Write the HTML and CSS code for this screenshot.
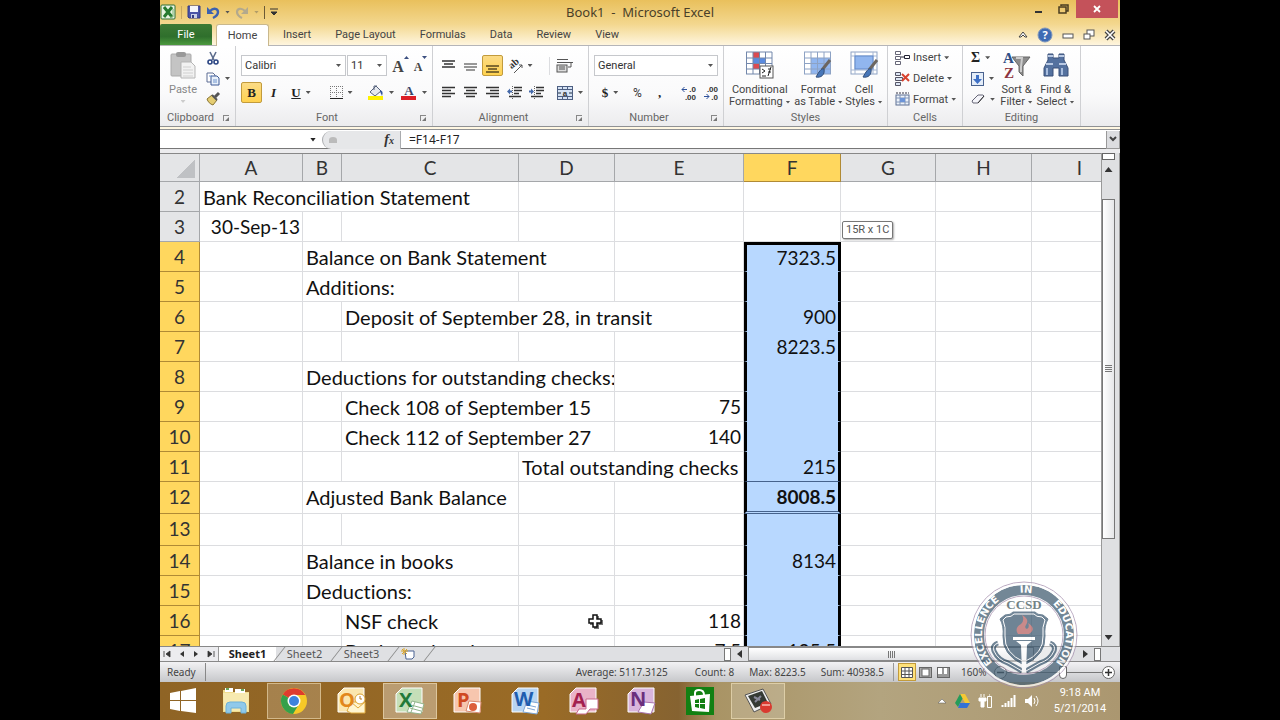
FILE: index.html
```html
<!DOCTYPE html>
<html lang="en">
<head>
    <meta charset="UTF-8">
    <meta name="viewport" content="width=device-width, initial-scale=1.0">
    <title>Book1 - Microsoft Excel</title>
    <link rel="stylesheet" href="styles.css">
</head>
<body>

<div class="screen">
    <!-- title bar -->
    <header class="title-bar">
        <div class="quick-access">
            <svg width="16" height="16" viewBox="0 0 16 16"><rect x="1" y="1" width="14" height="14" rx="1" fill="#e8f3e2" stroke="#2d6e35"/><path d="M4 3l8 10M12 3L4 13" stroke="#25792f" stroke-width="3"/><path d="M13 5v8h-3" stroke="#7bb573" fill="none"/></svg>
            <span class="bar-line"></span>
            <button class="icon-btn" aria-label="Save"><svg width="14" height="14" viewBox="0 0 14 14"><path d="M1 1h12v12H2l-1-1z" fill="#4b54a8" stroke="#333b86"/><rect x="3" y="1" width="8" height="6" fill="#f4f6fc"/><rect x="4" y="9" width="6" height="4" fill="#c9cfe6"/><rect x="5" y="10" width="2" height="3" fill="#333b86"/></svg></button>
            <button class="icon-btn" aria-label="Undo"><svg width="14" height="14" viewBox="0 0 14 14"><path d="M4 6c4-4 8-2 8 1s-3 5-5 6" fill="none" stroke="#3c62b0" stroke-width="2.4"/><path d="M1 2v7h7z" fill="#3c62b0"/></svg><i class="caret"></i></button>
            <button class="icon-btn faded" aria-label="Redo"><svg width="14" height="14" viewBox="0 0 14 14"><path d="M10 6C6 2 2 4 2 7s3 5 5 6" fill="none" stroke="#b3a98d" stroke-width="2.2"/><path d="M13 2v7H6z" fill="#b3a98d"/></svg><i class="caret"></i></button>
            <span class="bar-line dark"></span>
            <button class="icon-btn" aria-label="Customize"><svg width="8" height="8" viewBox="0 0 8 8"><path d="M0 1h8M1 4h6L4 7z" stroke="#333" fill="#333"/></svg></button>
        </div>
        <h1>Book1 &nbsp;- &nbsp;Microsoft Excel</h1>
        <div class="window-buttons">
            <button aria-label="Minimize"><svg width="10" height="10" viewBox="0 0 10 10"><path d="M1 8h7" stroke="#333" stroke-width="2"/></svg></button>
            <button aria-label="Restore"><svg width="11" height="10" viewBox="0 0 11 10"><path d="M3 2V1h7v6H8" fill="none" stroke="#4a3d20" stroke-width="1.5"/><rect x="1" y="3" width="7" height="6" fill="none" stroke="#4a3d20" stroke-width="1.5"/></svg></button>
            <button class="close" aria-label="Close"><svg width="8" height="8" viewBox="0 0 8 8"><path d="M1 1l6 6M7 1L1 7" stroke="#fff" stroke-width="1.8"/></svg></button>
        </div>
    </header>

    <!-- ribbon tabs -->
    <nav class="ribbon-tabs">
        <button class="tab file">File</button>
        <button class="tab active">Home</button>
        <button class="tab">Insert</button>
        <button class="tab">Page Layout</button>
        <button class="tab">Formulas</button>
        <button class="tab">Data</button>
        <button class="tab">Review</button>
        <button class="tab">View</button>
        <div class="tab-tools">
            <svg width="10" height="8" viewBox="0 0 10 8"><path d="M1 6l4-5 4 5H7L5 4 3 6z" fill="#fff" stroke="#444"/></svg>
            <svg width="16" height="16" viewBox="0 0 16 16"><circle cx="8" cy="8" r="7" fill="#3f6cb4" stroke="#7f97bd"/><text x="8" y="12" text-anchor="middle" class="help-mark">?</text></svg>
            <svg width="12" height="8" viewBox="0 0 12 8"><rect x="1" y="3" width="10" height="4" fill="#fff" stroke="#555"/></svg>
            <svg width="12" height="12" viewBox="0 0 12 12"><rect x="4" y="1" width="7" height="6" fill="#fff" stroke="#555"/><rect x="1" y="5" width="6" height="5" fill="#fff" stroke="#555"/></svg>
            <svg width="12" height="12" viewBox="0 0 12 12"><path d="M2 2l8 8M10 2l-8 8" stroke="#444" stroke-width="4"/><path d="M2 2l8 8M10 2l-8 8" stroke="#fff" stroke-width="1.6"/></svg>
        </div>
    </nav>

    <!-- ribbon -->
    <section class="ribbon">
        <div class="group clipboard">
            <div class="group-body">
                <button class="big-btn muted">
                    <svg width="27" height="28" viewBox="0 0 27 28"><rect x="1" y="3" width="20" height="22" rx="1" fill="#c4c4c4" stroke="#aaa"/><rect x="6" y="1" width="10" height="5" rx="2" fill="#999"/><path d="M11 11h10l4 4v12H11z" fill="#f2f2f2" stroke="#b5b5b5"/><path d="M13 16h8M13 19h10M13 22h10M13 25h10" stroke="#d0d0d0"/></svg>
                    <span>Paste</span><i class="caret"></i>
                </button>
                <div class="stack">
                    <button class="icon-btn" aria-label="Cut"><svg width="14" height="14" viewBox="0 0 14 14"><path d="M4 1l4 8M10 1L6 9" stroke="#5d6c8c" stroke-width="1.6"/><circle cx="4" cy="11" r="2" fill="none" stroke="#2c4684" stroke-width="1.6"/><circle cx="10" cy="11" r="2" fill="none" stroke="#2c4684" stroke-width="1.6"/></svg></button>
                    <button class="icon-btn" aria-label="Copy"><svg width="14" height="14" viewBox="0 0 14 14"><path d="M1 1h6l2 2v7H1z" fill="#fff" stroke="#5d6d93"/><path d="M5 4h6l2 2v7H5z" fill="#e9f1fb" stroke="#3e5a96"/><path d="M7 8h4M7 10h4M3 4h3" stroke="#6e93cc"/></svg><i class="caret"></i></button>
                    <button class="icon-btn" aria-label="Format Painter"><svg width="14" height="14" viewBox="0 0 14 14"><path d="M9 5l4-4" stroke="#555" stroke-width="3"/><path d="M6 3l5 5-4 5C4 12 2 10 1 7z" fill="#e5cd72" stroke="#8a7532"/><path d="M6 3l5 5" stroke="#555" stroke-width="2"/></svg></button>
                </div>
            </div>
            <div class="group-label">Clipboard<i class="launcher"></i></div>
        </div>

        <div class="group font">
            <div class="group-body rows">
                <div class="row">
                    <div class="combo font-name"><select aria-label="Font"><option>Calibri</option></select></div>
                    <div class="combo font-size"><select aria-label="Font size"><option>11</option></select></div>
                    <button class="tool grow" aria-label="Increase font size">A<svg width="5" height="4" viewBox="0 0 5 4"><path d="M0 3l2.500-3L5 3z" fill="#3c4f80"/></svg></button>
                    <button class="tool shrink" aria-label="Decrease font size">A<svg width="5" height="4" viewBox="0 0 5 4"><path d="M0 0h5L2.500 3z" fill="#3c4f80"/></svg></button>
                </div>
                <div class="row">
                    <button class="tool on letter">B</button>
                    <button class="tool letter italic">I</button>
                    <button class="tool letter under wide"><u>U</u><i class="caret"></i></button>
                    <span class="sep"></span>
                    <button class="tool wide" aria-label="Borders"><svg width="13" height="13" viewBox="0 0 13 13"><path d="M.5 0v12M6.500 0v12M12.500 0v12M0 .5h13M0 6.500h13" stroke="#777" stroke-dasharray="1 1"/><path d="M0 12.500h13" stroke="#222"/></svg><i class="caret"></i></button>
                    <span class="sep"></span>
                    <button class="tool wide" aria-label="Fill color"><svg width="16" height="15" viewBox="0 0 16 15"><path d="M8 1l5 5-6 5-5-4z" fill="#e6e9ef" stroke="#56627c"/><path d="M6 5V1h3" fill="none" stroke="#56627c"/><path d="M12 5c3 1 3 3 2 6-1-3-2-3-2-6" fill="#34559a"/><rect x="0" y="11" width="15" height="4" fill="#fff200"/></svg><i class="caret"></i></button>
                    <button class="tool wide" aria-label="Font color"><svg width="16" height="15" viewBox="0 0 16 15"><text x="8" y="10" text-anchor="middle" class="color-a">A</text><rect x="0" y="11" width="15" height="4" fill="#dd1f26"/></svg><i class="caret"></i></button>
                </div>
            </div>
            <div class="group-label">Font<i class="launcher"></i></div>
        </div>

        <div class="group alignment">
            <div class="group-body rows">
                <div class="row">
                    <button class="tool" aria-label="Top align"><svg width="14" height="14" viewBox="0 0 14 14"><path d="M0 2h13M2 5h9M0 8h13" stroke="#333" stroke-width="1.5"/></svg></button>
                    <button class="tool" aria-label="Middle align"><svg width="14" height="14" viewBox="0 0 14 14"><path d="M0 5h13M0 8h13M2 11h9" stroke="#777" stroke-width="1.5"/></svg></button>
                    <button class="tool on" aria-label="Bottom align"><svg width="14" height="14" viewBox="0 0 14 14"><path d="M0 7h13M2 10h9M0 13h13" stroke="#5a4a20" stroke-width="1.5"/></svg></button>
                    <button class="tool wide" aria-label="Orientation"><svg width="15" height="14" viewBox="0 0 15 14"><text x="2" y="8" transform="rotate(-40 6 7)" class="ab">ab</text><path d="M6 14l8-8M11 6h3v3" stroke="#555" fill="none"/></svg><i class="caret"></i></button>
                    <span class="sep"></span>
                    <button class="tool" aria-label="Wrap text"><svg width="16" height="15" viewBox="0 0 16 15"><path d="M0 1.500h11M0 4.500h16" stroke="#555"/><rect x="0" y="7" width="10" height="7" fill="#ddd" stroke="#555"/><path d="M2 9h6M2 11h6" stroke="#555"/><path d="M14 4v5h-3" stroke="#555" fill="none"/></svg></button>
                </div>
                <div class="row">
                    <button class="tool" aria-label="Align left"><svg width="14" height="13" viewBox="0 0 14 13"><path d="M0 1.500h13M0 4.500h9M0 7.500h13M0 10.500h9" stroke="#333" stroke-width="1.500"/></svg></button>
                    <button class="tool" aria-label="Center"><svg width="14" height="13" viewBox="0 0 14 13"><path d="M0 1.500h13M2 4.500h9M0 7.500h13M2 10.500h9" stroke="#333" stroke-width="1.500"/></svg></button>
                    <button class="tool" aria-label="Align right"><svg width="14" height="13" viewBox="0 0 14 13"><path d="M0 1.500h13M4 4.500h9M0 7.500h13M4 10.500h9" stroke="#333" stroke-width="1.500"/></svg></button>
                    <button class="tool" aria-label="Decrease indent"><svg width="15" height="13" viewBox="0 0 15 13"><path d="M5.500 0v13" stroke="#666" stroke-dasharray="1 1"/><path d="M7 1.500h8M7 4.500h8M7 7.500h5M2 10.500h12" stroke="#333" stroke-width="1.500"/><path d="M0 5.500l3-3v2h2v2H3v2z" fill="#4468a8"/></svg></button>
                    <button class="tool" aria-label="Increase indent"><svg width="15" height="13" viewBox="0 0 15 13"><path d="M5.500 0v13" stroke="#666" stroke-dasharray="1 1"/><path d="M7 1.500h8M7 4.500h8M7 7.500h5M2 10.500h12" stroke="#333" stroke-width="1.500"/><path d="M5 5.500l-3-3v2H0v2h2v2z" fill="#4468a8"/></svg></button>
                    <button class="tool merge wide" aria-label="Merge and center"><svg width="16" height="14" viewBox="0 0 16 14"><rect x=".5" y=".5" width="15" height="13" fill="#d5e2f4" stroke="#4d5f82"/><path d="M0 3.500h16M0 10.500h16M5.500 0v3M10.500 0v3M5.500 11v3M10.500 11v3" stroke="#4d5f82"/><text x="8" y="10" text-anchor="middle" class="tiny">a</text><path d="M1 7h3M12 7h3" stroke="#234"/></svg><i class="caret"></i></button>
                </div>
            </div>
            <div class="group-label">Alignment<i class="launcher"></i></div>
        </div>

        <div class="group number">
            <div class="group-body rows">
                <div class="row">
                    <div class="combo number-format"><select aria-label="Number format"><option>General</option></select></div>
                </div>
                <div class="row">
                    <button class="tool letter wide">$<i class="caret"></i></button>
                    <button class="tool percent">%</button>
                    <button class="tool letter">,</button>
                    <span class="sep"></span>
                    <button class="tool" aria-label="Increase decimal"><svg width="16" height="14" viewBox="0 0 16 14"><text x="15" y="6" text-anchor="end" class="tiny">.0</text><text x="15" y="14" text-anchor="end" class="tiny">.00</text><path d="M1 3.500h5M3.500 1L1 3.500 3.500 6" stroke="#2e519a" fill="none"/></svg></button>
                    <button class="tool" aria-label="Decrease decimal"><svg width="16" height="14" viewBox="0 0 16 14"><text x="15" y="6" text-anchor="end" class="tiny">.00</text><text x="15" y="14" text-anchor="end" class="tiny">.0</text><path d="M1 10.500h5M3.500 8L6 10.500 3.500 13" stroke="#2e519a" fill="none"/></svg></button>
                </div>
            </div>
            <div class="group-label">Number<i class="launcher"></i></div>
        </div>

        <div class="group styles">
            <div class="group-body">
                <button class="big-btn cond">
                    <svg width="28" height="28" viewBox="0 0 28 28"><rect x="1" y="1" width="25" height="22" fill="#fff"/><rect x="7" y="1" width="6" height="17" fill="#dc4a50"/><rect x="7" y="7" width="12" height="6" fill="#5a8be0"/><path d="M.5 1v22M7 1v22M13.500 1v22M19.500 1v22M26 1v22M0 1h26M0 7h26M0 12.500h26M0 18h26M0 23h26" stroke="#7287ab"/><rect x="14" y="15" width="13" height="12" fill="#fff" stroke="#555"/><path d="M16 18l3 2-3 2M16 25h4M22 18h3M22 21h3M25 16l-3 9" stroke="#222" fill="none"/></svg>
                    <span>Conditional<br>Formatting <i class="caret"></i></span>
                </button>
                <button class="big-btn as-table">
                    <svg width="28" height="28" viewBox="0 0 28 28"><rect x="1" y="1" width="26" height="22" fill="#fff"/><rect x="7" y="7" width="20" height="16" fill="#91b6ef"/><path d="M.5 1v22M7 1v22M13.500 1v22M20 1v22M26.500 1v22M0 1h27M0 7h27M0 12.500h27M0 18h27M0 23h27" stroke="#8da2c4"/><path d="M26 9l-8 10" stroke="#6c6660" stroke-width="3"/><path d="M20 18c-3-1-5 3-8 8 5 1 9-2 8-8" fill="#4776b8" stroke="#35517c"/></svg>
                    <span>Format<br>as Table <i class="caret"></i></span>
                </button>
                <button class="big-btn cell-styles">
                    <svg width="28" height="28" viewBox="0 0 28 28"><rect x="1" y="1" width="26" height="22" fill="#fff" stroke="#8da2c4"/><path d="M5 1v22M23 1v22M1 5h26M1 19h26" stroke="#a5b6d2"/><rect x="5" y="5" width="18" height="13" fill="#91b6ef" stroke="#6389c9"/><path d="M27 9l-8 10" stroke="#6c6660" stroke-width="3"/><path d="M21 18c-3-1-5 3-8 8 5 1 9-2 8-8" fill="#4776b8" stroke="#35517c"/></svg>
                    <span>Cell<br>Styles <i class="caret"></i></span>
                </button>
            </div>
            <div class="group-label">Styles</div>
        </div>

        <div class="group cells">
            <div class="group-body">
                <div class="stack">
                    <button class="line-btn"><svg width="15" height="14" viewBox="0 0 15 14"><path d="M.5.5h5v3h-5zM.5 5.500h5v3h-5zM.5 10.500h5v3h-5z" fill="#fff" stroke="#667"/><path d="M6 6h3M9.500 4.500h5v3h-5z" stroke="#223" fill="#fff"/></svg>Insert <i class="caret"></i></button>
                    <button class="line-btn"><svg width="15" height="14" viewBox="0 0 15 14"><path d="M.5.5h5v3h-5zM.5 5.500h7v3h-7zM.5 10.500h5v3h-5z" fill="#dde6f4" stroke="#556"/><path d="M7 2l7 7M14 2L7 9" stroke="#d8432f" stroke-width="2"/></svg>Delete <i class="caret"></i></button>
                    <button class="line-btn"><svg width="15" height="14" viewBox="0 0 15 14"><path d="M1 1h13" stroke="#334" stroke-dasharray="2 1"/><rect x="1" y="3" width="13" height="10" fill="#edf3fb" stroke="#5c6f92"/><path d="M5 3v10M10 3v10M1 6h13M1 10h13" stroke="#8295b6"/><rect x="5" y="6" width="5" height="4" fill="#6c94d8"/></svg>Format <i class="caret"></i></button>
                </div>
            </div>
            <div class="group-label">Cells</div>
        </div>

        <div class="group editing">
            <div class="group-body">
                <div class="stack">
                    <button class="icon-btn sigma">Σ<i class="caret"></i></button>
                    <button class="icon-btn" aria-label="Fill"><svg width="13" height="14" viewBox="0 0 13 14"><rect x=".5" y=".5" width="12" height="13" fill="#e4edf9" stroke="#49628f"/><path d="M5 3h3v4h3l-4.500 5L2 7h3z" fill="#3e70c6"/></svg><i class="caret"></i></button>
                    <button class="icon-btn" aria-label="Clear"><svg width="14" height="12" viewBox="0 0 14 12"><path d="M1 8l6-6h5l1 1-6 7H2z" fill="#f5f5fa" stroke="#667"/><path d="M7 10l6-7" stroke="#333"/></svg><i class="caret"></i></button>
                </div>
                <button class="big-btn">
                    <svg width="28" height="28" viewBox="0 0 28 28"><text x="0" y="12" class="sort-a">A</text><text x="1" y="27" class="sort-z">Z</text><path d="M9 6h18l-7 9v10l-4-4v-6z" fill="#8c8c8c" stroke="#666"/><path d="M13 7h6l-1 9v5" fill="none" stroke="#ccc" stroke-width="2"/></svg>
                    <span>Sort &amp;<br>Filter <i class="caret"></i></span>
                </button>
                <button class="big-btn">
                    <svg width="28" height="28" viewBox="0 0 28 28"><path d="M6 3h5v4h6V3h5v6l4 8v8h-9v-8h-6v8H2v-8l4-8z" fill="#54719f" stroke="#3a5078"/><path d="M6 5h5M17 5h5M4 13h7M17 13h7" stroke="#b9c9e3" stroke-width="2"/><path d="M5 17v7M20 17v7" stroke="#a9bedf" stroke-width="2"/></svg>
                    <span>Find &amp;<br>Select <i class="caret"></i></span>
                </button>
            </div>
            <div class="group-label">Editing</div>
        </div>
    </section>

    <!-- formula bar -->
    <div class="formula-bar">
        <input class="name-box" type="text" aria-label="Name box">
        <i class="caret black"></i>
        <div class="fx"><span class="knob"></span><span class="fx-mark"><i>f</i><small>x</small></span></div>
        <input class="formula" type="text" aria-label="Formula" value="=F14-F17">
        <button class="expand" aria-label="Expand formula bar"><svg width="8" height="6" viewBox="0 0 8 6"><path d="M1 1l3 3 3-3" stroke="#444" stroke-width="2" fill="none"/></svg></button>
    </div>

    <!-- sheet -->
    <main class="sheet">
        <div class="grid-area">
            <table class="grid">
                <colgroup><col class="w-head"><col class="w-a"><col class="w-b"><col class="w-c"><col class="w-d"><col class="w-e"><col class="w-f"><col class="w-g"><col class="w-h"><col class="w-i"></colgroup>
                <thead>
                    <tr><th class="corner"></th><th>A</th><th>B</th><th>C</th><th>D</th><th>E</th><th class="picked">F</th><th>G</th><th>H</th><th>I</th></tr>
                </thead>
                <tbody>
                    <tr><th>2</th><td colspan="3">Bank Reconciliation Statement</td><td></td><td></td><td></td><td></td><td></td><td></td></tr>
                    <tr><th>3</th><td class="num">30-Sep-13</td><td></td><td></td><td></td><td></td><td></td><td></td><td></td><td></td></tr>
                    <tr class="first"><th class="picked">4</th><td></td><td colspan="3">Balance on Bank Statement</td><td></td><td class="num sel">7323.5</td><td></td><td></td><td></td></tr>
                    <tr><th class="picked">5</th><td></td><td colspan="2">Additions:</td><td></td><td></td><td class="sel"></td><td></td><td></td><td></td></tr>
                    <tr><th class="picked">6</th><td></td><td></td><td colspan="3">Deposit of September 28, in transit</td><td class="num sel">900</td><td></td><td></td><td></td></tr>
                    <tr><th class="picked">7</th><td></td><td></td><td></td><td></td><td></td><td class="num sel">8223.5</td><td></td><td></td><td></td></tr>
                    <tr><th class="picked">8</th><td></td><td colspan="3">Deductions for outstanding checks:</td><td></td><td class="sel"></td><td></td><td></td><td></td></tr>
                    <tr><th class="picked">9</th><td></td><td></td><td colspan="2">Check 108 of September 15</td><td class="num">75</td><td class="sel"></td><td></td><td></td><td></td></tr>
                    <tr><th class="picked">10</th><td></td><td></td><td colspan="2">Check 112 of September 27</td><td class="num">140</td><td class="sel"></td><td></td><td></td><td></td></tr>
                    <tr><th class="picked">11</th><td></td><td></td><td></td><td colspan="2">Total outstanding checks</td><td class="num sel ruled">215</td><td></td><td></td><td></td></tr>
                    <tr class="tall"><th class="picked">12</th><td></td><td colspan="2">Adjusted Bank Balance</td><td></td><td></td><td class="num sel total">8008.5</td><td></td><td></td><td></td></tr>
                    <tr class="tall"><th class="picked">13</th><td></td><td></td><td></td><td></td><td></td><td class="sel"></td><td></td><td></td><td></td></tr>
                    <tr><th class="picked">14</th><td></td><td colspan="2">Balance in books</td><td></td><td></td><td class="num sel">8134</td><td></td><td></td><td></td></tr>
                    <tr><th class="picked">15</th><td></td><td colspan="2">Deductions:</td><td></td><td></td><td class="sel"></td><td></td><td></td><td></td></tr>
                    <tr><th class="picked">16</th><td></td><td></td><td>NSF check</td><td></td><td class="num">118</td><td class="sel"></td><td></td><td></td><td></td></tr>
                    <tr><th class="picked">17</th><td></td><td></td><td>Bank service charge</td><td></td><td class="num">7.5</td><td class="num sel">125.5</td><td></td><td></td><td></td></tr>
                </tbody>
            </table>
            <div class="size-tip">15R x 1C</div>
            <svg class="cursor" width="18" height="18" viewBox="0 0 18 18"><path d="M7 3h5v4h4v5h-4v4H7v-4H3V7h4z" fill="#777"/><path d="M6 2h4v4h4v4h-4v4H6v-4H2V6h4z" fill="#fff" stroke="#111" stroke-width="1.500"/></svg>
        </div>
        <div class="v-scroll">
            <span class="split"></span>
            <span class="arrow up"></span>
            <div class="v-track"><div class="v-thumb"><i></i></div></div>
            <span class="arrow down"></span>
        </div>
    </main>

    <!-- sheet tabs and horizontal scroll -->
    <div class="sheet-bar">
        <div class="sheet-nav">
            <svg width="8" height="8" viewBox="0 0 8 8"><path d="M1 1v6M7 1v6L3 4z" fill="#333" stroke="#333" stroke-width=".8"/></svg>
            <svg width="8" height="8" viewBox="0 0 8 8"><path d="M6 1v6L2 4z" fill="#333"/></svg>
            <svg width="8" height="8" viewBox="0 0 8 8"><path d="M2 1v6l4-3z" fill="#333"/></svg>
            <svg width="8" height="8" viewBox="0 0 8 8"><path d="M7 1v6M1 1v6l4-3z" fill="#333" stroke="#333" stroke-width=".8"/></svg>
        </div>
        <button class="sheet-tab current">Sheet1</button>
        <button class="sheet-tab">Sheet2</button>
        <button class="sheet-tab">Sheet3</button>
        <button class="sheet-tab new" aria-label="Insert worksheet"><svg width="14" height="12" viewBox="0 0 14 12"><path d="M4 3h9v6l-2 2H5z" fill="#fff" stroke="#4a6293"/><path d="M3 0v7M0 3h7M1 1l5 5M6 1L1 6" stroke="#d9a52c"/></svg></button>
        <div class="h-scroll">
            <span class="h-split"></span>
            <span class="arrow left"></span>
            <div class="h-track"><div class="h-thumb"><i></i></div></div>
            <span class="arrow right"></span>
            <span class="h-split"></span>
        </div>
    </div>

    <!-- status bar -->
    <footer class="status-bar">
        <span class="ready">Ready</span>
        <div class="stats">
            <span>Average: 5117.3125</span>
            <span>Count: 8</span>
            <span>Max: 8223.5</span>
            <span>Sum: 40938.5</span>
        </div>
        <div class="views">
            <button class="on" aria-label="Normal"><svg width="12" height="11" viewBox="0 0 12 11"><path d="M.5.500h11v10H.5zM4 0v11M8 0v11M0 4h12M0 7.500h12" fill="#fff" stroke="#555"/></svg></button>
            <button aria-label="Page layout"><svg width="13" height="11" viewBox="0 0 13 11"><rect x=".5" y=".5" width="12" height="10" fill="#aaa" stroke="#666"/><rect x="3" y="2" width="7" height="7" fill="#fff" stroke="#666"/></svg></button>
            <button aria-label="Page break preview"><svg width="13" height="11" viewBox="0 0 13 11"><rect x=".5" y=".5" width="12" height="10" fill="#999" stroke="#666"/><path d="M1 1h4v6H1zM7 1h3v6H7z" fill="#fff"/></svg></button>
        </div>
        <div class="zoom">
            <span>160%</span>
            <button aria-label="Zoom out"><svg width="11" height="11" viewBox="0 0 11 11"><path d="M2 5.500h7" stroke="#333" stroke-width="1.500"/></svg></button>
            <input type="range" min="10" max="220" value="135" aria-label="Zoom">
            <button aria-label="Zoom in"><svg width="11" height="11" viewBox="0 0 11 11"><path d="M2 5.500h7M5.500 2v7" stroke="#333" stroke-width="1.500"/></svg></button>
        </div>
    </footer>

    <!-- taskbar -->
    <div class="taskbar">
        <button class="start" aria-label="Start"><svg width="28" height="26" viewBox="0 0 28 26"><path d="M1 5l10-2v9H1zM12 3l15-3v12H12zM1 13h10v10L1 21zM12 13h15v12l-15-2z" fill="#fff"/></svg></button>
        <button class="task" aria-label="File Explorer"><svg width="30" height="28" viewBox="0 0 30 28"><path d="M2 3h8l2 2h16v20H2z" fill="#f1dd8e"/><path d="M4 1h8v4H4zM14 2h10v4H14z" fill="#fff"/><path d="M5 2h3M20 3h3" stroke="#6aa75c" stroke-width="2"/><path d="M2 6h26l-1 18H3z" fill="#f7eab0"/><path d="M5 26v-7q0-4 4-4h12q4 0 4 4v7h-5v-5h-10v5z" fill="#8fc9ea" stroke="#6db1d8"/></svg></button>
        <button class="task open" aria-label="Chrome"><svg width="28" height="28" viewBox="0 0 28 28"><circle cx="14" cy="14" r="13" fill="#f6c927"/><path d="M14 14L2.700 7.500A13 13 0 0 1 25.300 8H14z" fill="#df3c2e"/><path d="M14 14L2.700 7.500A13 13 0 0 0 13 27l6-10z" fill="#35a04b"/><circle cx="14" cy="14" r="6.500" fill="#fff"/><circle cx="14" cy="14" r="5" fill="#3d82dc"/></svg></button>
        <button class="task" aria-label="Outlook"><svg width="30" height="28" viewBox="0 0 30 28"><path d="M7 1h20v24H1V7z" fill="#fbe6ae" stroke="#fff"/><path d="M14 15h14v11H14l-4-2z" fill="#fff5d0" stroke="#e1aa3d"/><path d="M14 15l7 6 7-6" fill="none" stroke="#e1aa3d"/><circle cx="23" cy="12" r="5" fill="#fff" stroke="#dba02d"/><path d="M23 9v3h2" fill="none" stroke="#b9761d"/><text x="2" y="20" class="app-letter outlook">O</text></svg></button>
        <button class="task open current" aria-label="Excel"><svg width="30" height="28" viewBox="0 0 30 28"><path d="M7 1h20v24H1V7z" fill="#c5dfb8" stroke="#fff"/><path d="M17 14l12 3-3 10-14-2z" fill="#fff" stroke="#92b58b"/><path d="M16 18l11 3M15 21l11 3M20 15l-4 10" stroke="#8fb389"/><text x="4" y="20" class="app-letter excel">X</text></svg></button>
        <button class="task" aria-label="PowerPoint"><svg width="30" height="28" viewBox="0 0 30 28"><path d="M7 1h20v24H1V7z" fill="#f7c6ae" stroke="#fff"/><path d="M16 14l12 1-1 11-14-2z" fill="#fff" stroke="#d98a70"/><circle cx="20" cy="20" r="4" fill="#dc603c"/><text x="4" y="20" class="app-letter ppt">P</text></svg></button>
        <button class="task" aria-label="Word"><svg width="30" height="28" viewBox="0 0 30 28"><path d="M7 1h20v24H1V7z" fill="#b9d5f2" stroke="#fff"/><path d="M16 14l12 2-2 11-14-2z" fill="#fff" stroke="#7ca5d5"/><path d="M16 18l9 2M16 21l8 2" stroke="#7ca5d5"/><text x="3" y="19" class="app-letter word">W</text></svg></button>
        <button class="task" aria-label="Access"><svg width="30" height="28" viewBox="0 0 30 28"><path d="M7 1h20v24H1V7z" fill="#eab3c8" stroke="#fff"/><path d="M17 12h12v10h-8l-4 5H7l3-5h7z" fill="#fff" stroke="#c9688d"/><text x="3" y="20" class="app-letter access">A</text></svg></button>
        <button class="task" aria-label="OneNote"><svg width="30" height="28" viewBox="0 0 30 28"><path d="M7 1h20v24H1V7z" fill="#d9b5dc" stroke="#fff"/><path d="M17 15l11 1-4 11-13-2z" fill="#fff" stroke="#a974ad"/><text x="3" y="19" class="app-letter note">N</text></svg></button>
        <button class="task" aria-label="Store"><svg width="28" height="28" viewBox="0 0 28 28"><rect width="28" height="28" fill="#128012"/><path d="M4 9l20-2-1 18-17-1z" fill="#fff"/><path d="M9 10V6q0-3 4-3 5 0 5 5" fill="none" stroke="#fff" stroke-width="2"/><path d="M9 13l4-1v4H9zM14 12l5-1v5h-5zM9 17h4v4l-4-1zM14 17h5v5l-5-1z" fill="#128012"/></svg></button>
        <button class="task open" aria-label="Recorder"><svg width="30" height="26" viewBox="0 0 30 26"><path d="M2 7l18-6 8 15-17 8z" fill="#eee" stroke="#555"/><path d="M5 8l14-5 6 12-13 5z" fill="#353a34"/><path d="M11 9l6 3M12 14l6-6" stroke="#889" stroke-width="2"/><circle cx="23" cy="19" r="6" fill="#d93a30"/><path d="M19 17h8" stroke="#f09a90" stroke-width="2"/></svg></button>
        <div class="tray">
            <svg width="10" height="6" viewBox="0 0 10 6"><path d="M1 5l4-4 4 4z" fill="#fff" stroke="#555" stroke-width=".5"/></svg>
            <svg width="15" height="14" viewBox="0 0 15 14"><path d="M5 0h5l5 9h-5z" fill="#f4c933"/><path d="M5 0l2.500 4.500L3 13 0 9z" fill="#259c5a"/><path d="M5 9h10l-3 5H3z" fill="#3472d5"/></svg>
            <svg width="15" height="14" viewBox="0 0 15 14"><path d="M3 0v3M6 0v3M1 4h7v3H6v6H3V7H1z" fill="#fff" stroke="#fff"/><path d="M9.500 2.500h4v11h-4zM11 1h1" fill="none" stroke="#fff"/></svg>
            <svg width="15" height="12" viewBox="0 0 15 12"><path d="M1.500 12v-2M4.500 12V8M7.500 12V6M10.500 12V3M13.500 12V0" stroke="#fff" stroke-width="2"/></svg>
            <svg width="16" height="14" viewBox="0 0 16 14"><path d="M1 5h3l4-4v12L4 9H1z" fill="#fff"/><path d="M10 4q2 3 0 6M12 2q4 5 0 10" stroke="#fff" fill="none"/></svg>
        </div>
        <div class="clock"><span>9:18 AM</span><span>5/21/2014</span></div>
    </div>

    <!-- school seal over the corner -->
    <svg class="seal" width="108" height="108" viewBox="0 0 108 108">
        <defs><path id="ring" d="M24 83A42 42 0 1 1 84 83"/></defs>
        <circle cx="54" cy="54" r="45" fill="none" stroke="#455f73" stroke-width="10"/>
        <circle cx="54" cy="54" r="53" fill="none" stroke="#a58fae"/>
        <circle cx="54" cy="54" r="51" fill="none" stroke="#fff" stroke-width="2"/>
        <circle cx="54" cy="54" r="39" fill="#fff" fill-opacity=".5" stroke="#a58fae"/>
        <text class="seal-ring"><textPath href="#ring" startOffset="1%">EXCELLENCE</textPath></text>
        <text class="seal-ring" text-anchor="middle"><textPath href="#ring" startOffset="51%">IN</textPath></text>
        <text class="seal-ring" text-anchor="end"><textPath href="#ring" startOffset="99%">EDUCATION</textPath></text>
        <text x="54" y="28" text-anchor="middle" class="seal-name">CCSD</text>
        <path d="M35 34q6 0 8-3h22q2 3 8 3l5 4q-4 7-3 17 1 19-21 29-22-10-21-29 1-10-3-17z" fill="#3f5b72" stroke="#3f5b72"/>
        <path d="M36 36q6 0 8-3h20q2 3 8 3l3 3q-3 7-2 16 1 17-19 26-20-9-19-26 1-9-2-16z" fill="none" stroke="#fff"/>
        <path d="M28 62q-6 2-4 8 4 9 14 12l14 8M80 62q6 2 4 8-4 9-14 12l-14 8" fill="none" stroke="#3f5b72" stroke-width="5"/>
        <path d="M28 62q-6 2-4 8 4 9 14 12l14 8M80 62q6 2 4 8-4 9-14 12l-14 8" fill="none" stroke="#fff"/>
        <path d="M43 56h22v3H43zM46 60h16l-5 4-1 28h-4l-1-28z" fill="#fff"/>
        <path d="M48 53q-4-6 3-10 4-4 1-9 8 4 4 10-2 3 1 4 3-2 1-6 9 6 1 11z" fill="#b86464"/>
    </svg>
</div>

</body>
</html>
```

FILE: styles.css
```css
* {
    box-sizing: border-box;
}

body {
    margin: 0;
    background: #000;
    color: #333;
    font-family: Roboto, "Noto Sans", sans-serif;
    font-size: 11px;
}

button, input, select {
    font: inherit;
    color: inherit;
    margin: 0;
    padding: 0;
    border: none;
    background: none;
}

svg {
    display: block;
    flex: none;
    overflow: visible;
}

.screen {
    position: relative;
    display: flex;
    flex-direction: column;
    width: 75%;
    height: 100vh;
    margin: 0 auto;
    overflow: hidden;
    background: linear-gradient(#e9c05c, #f3d78e 24px, #fff7e2 46px);
}

/* title bar */
.title-bar {
    display: grid;
    grid-template-columns: 1fr auto 1fr;
    height: 24px;
    flex: none;
}

.title-bar h1 {
    margin: 0;
    font-family: "Noto Sans", sans-serif;
    font-size: 13px;
    font-weight: normal;
    line-height: 24px;
    color: #4a3f28;
}

.quick-access {
    display: flex;
    align-items: center;
    gap: 5px;
}

.bar-line {
    width: 1px;
    height: 13px;
    background: #c9a860;
}

.bar-line.dark {
    background: #6b5a35;
}

.icon-btn {
    display: flex;
    align-items: center;
    gap: 5px;
}

.faded .caret {
    opacity: 0.4;
}

.window-buttons {
    display: flex;
    justify-content: flex-end;
}

.window-buttons button {
    width: 25px;
    height: 18px;
    display: grid;
    place-items: center;
}

.window-buttons .close {
    width: 42px;
    margin-right: 2px;
    background: #c4525a;
}

.caret {
    display: inline-block;
    width: 5px;
    height: 3px;
    background: #555;
    clip-path: polygon(0 0, 100% 0, 50% 100%);
    vertical-align: middle;
    flex: none;
}

/* ribbon tabs */
.ribbon-tabs {
    display: flex;
    height: 22px;
    flex: none;
    border-bottom: 1px solid #b5b5b8;
}

.tab {
    height: 21px;
    padding: 0 12px;
    line-height: 22px;
    color: #444;
}

.tab.file {
    width: 52px;
    margin-right: 4px;
    border-radius: 2px 2px 0 0;
    background: linear-gradient(#3d7a35, #2f6f2c 60%, #4c9a3f);
    color: #fff;
}

.tab.active {
    height: 22px;
    width: 53px;
    margin-right: 2px;
    padding: 0;
    background: #fff;
    border: 1px solid #c9b88d;
    border-bottom: none;
    border-radius: 3px 3px 0 0;
}

.tab-tools {
    display: flex;
    align-items: center;
    gap: 9px;
    margin-left: auto;
    margin-right: 4px;
}

.help-mark {
    font: bold 11px "Open Sans", sans-serif;
    fill: #fff;
}

/* ribbon */
.ribbon {
    display: flex;
    height: 81px;
    flex: none;
    background: linear-gradient(#fff, #fafafb 60%, #ececee);
    border-bottom: 1px solid #8f9194;
}

.group {
    display: flex;
    flex-direction: column;
    border-right: 1px solid #cfd0d3;
    flex: none;
}

.clipboard { width: 76px; }
.font { width: 197px; }
.alignment { width: 156px; }
.number { width: 135px; }
.styles { width: 164px; }
.cells { width: 75px; }
.editing { width: 118px; }

.group-body {
    display: flex;
    flex: 1;
    min-height: 0;
    padding: 2px 4px 0;
}

.group-body.rows {
    flex-direction: column;
    gap: 6px;
    padding: 9px 5px 0;
}

.group-label {
    position: relative;
    height: 17px;
    line-height: 17px;
    text-align: center;
    color: #666;
    padding-right: 14px;
}

.styles .group-label, .cells .group-label, .editing .group-label {
    padding-right: 0;
}

.launcher {
    position: absolute;
    right: 6px;
    top: 6px;
    width: 6px;
    height: 6px;
    border-top: 1px solid #888;
    border-left: 1px solid #888;
}

.launcher::after {
    content: "";
    position: absolute;
    right: 0;
    bottom: 0;
    border: 2px solid #777;
    border-top-color: transparent;
    border-left-color: transparent;
}

.row {
    display: flex;
    align-items: center;
    height: 21px;
    gap: 1px;
}

.stack {
    display: flex;
    flex-direction: column;
    gap: 1px;
    padding-left: 4px;
}

.stack button {
    height: 20px;
}

.big-btn {
    display: flex;
    flex-direction: column;
    align-items: center;
    line-height: 12px;
    color: #444;
    padding: 3px 2px 0;
}

.big-btn > span {
    margin-top: 5px;
    white-space: nowrap;
}

.clipboard .big-btn {
    width: 38px;
}

.muted {
    color: #888;
}

.muted .caret {
    margin-top: 4px;
    background: #ccc;
}

.styles .group-body {
    padding-left: 3px;
}

.cond { width: 66px; }
.as-table { width: 52px; }
.cell-styles { width: 39px; }

.editing .group-body {
    padding-right: 0;
}

.editing .big-btn {
    width: 39px;
}

.editing .stack {
    width: 30px;
}

.cells .stack {
    padding-left: 3px;
}

.line-btn {
    display: flex;
    align-items: center;
    gap: 3px;
    color: #444;
}

.sigma {
    font: bold 14px "Liberation Serif", serif;
    color: #222;
}

.combo {
    position: relative;
    height: 21px;
    border: 1px solid #c6c8cc;
    background: #fff;
}

.combo::after {
    content: "";
    position: absolute;
    right: 4px;
    top: 8px;
    width: 5px;
    height: 3px;
    background: #555;
    clip-path: polygon(0 0, 100% 0, 50% 100%);
    pointer-events: none;
}

.combo select {
    appearance: none;
    width: 100%;
    height: 19px;
    padding-left: 3px;
}

.font-name { width: 105px; }
.font-size { width: 40px; margin-right: 3px; }
.number-format { width: 125px; }

.font-name, .font-size {
    flex: none;
}

.tool {
    display: flex;
    align-items: center;
    justify-content: center;
    gap: 5px;
    width: 21px;
    height: 21px;
    flex: none;
}

.tool.wide {
    width: 32px;
}

.tool.on {
    border: 1px solid #c29b3c;
    border-radius: 2px;
    background: linear-gradient(#fbdb86, #ffd24f);
}

.letter {
    font: bold 13px "Liberation Serif", serif;
    color: #222;
}

.italic {
    font-style: italic;
}

.percent {
    font-size: 12px;
}

.grow, .shrink {
    width: 19px;
    gap: 0;
    align-items: flex-start;
    font: bold 16px "Liberation Serif", serif;
    line-height: 21px;
    padding-top: 1px;
    color: #444;
}

.shrink {
    font-size: 12px;
    line-height: 23px;
}

.sep {
    width: 1px;
    height: 18px;
    margin: 0 3px;
    background: #dcdde0;
}

.alignment .sep {
    margin: 0 3px 0 12px;
}

.merge {
    margin-left: 6px;
}

.color-a {
    font: bold 13px "Liberation Serif", serif;
    fill: #3a4668;
}

.ab {
    font: bold 10px "Liberation Serif", serif;
    fill: #333;
}

.tiny {
    font: bold 8px "Liberation Sans", sans-serif;
    fill: #333;
}

.sort-a, .sort-z {
    font: bold 15px "Liberation Serif", serif;
    fill: #2e4f86;
}

.sort-z {
    fill: #8c3440;
}

/* formula bar */
.formula-bar {
    display: flex;
    align-items: center;
    height: 24px;
    flex: none;
    margin-top: 2px;
    border-top: 1px solid #8f9194;
    background: #fff;
    border-bottom: 4px solid #ececee;
    box-shadow: inset 0 -1px 0 #777;
}

.name-box {
    width: 150px;
    height: 18px;
    padding-left: 4px;
}

.caret.black {
    width: 6px;
    height: 4px;
    background: #222;
}

.fx {
    display: flex;
    align-items: center;
    justify-content: space-between;
    width: 79px;
    height: 18px;
    margin-left: 6px;
    padding: 0 6px;
    background: #e6e7e9;
    border: 1px solid #a9abae;
    border-top: none;
    border-bottom: none;
    border-radius: 9px 0 0 9px;
    flex: none;
}

.knob {
    width: 8px;
    height: 6px;
    border-radius: 50% 50% 0 0;
    background: #bbb;
}

.fx-mark {
    font: bold 14px "Liberation Serif", serif;
    color: #333;
}

.fx-mark small {
    font-size: 10px;
    font-style: italic;
}

.formula {
    flex: 1;
    min-width: 0;
    height: 18px;
    padding-left: 8px;
    font-family: "Noto Sans", sans-serif;
    font-size: 12px;
    color: #222;
}

.expand {
    display: grid;
    place-items: center;
    width: 14px;
    height: 18px;
    background: #dcdde0;
    border: 1px solid #999;
    border-top: none;
}

/* sheet */
.sheet {
    display: flex;
    flex: 1;
    min-height: 0;
    background: #fff;
}

.grid-area {
    position: relative;
    flex: 1;
    min-width: 0;
    overflow: hidden;
    border-top: 1px solid #888;
}

.grid {
    width: 967px;
    table-layout: fixed;
    border-collapse: separate;
    border-spacing: 0;
    font-family: Lato, "Noto Sans", sans-serif;
    font-size: 19px;
    font-variant-ligatures: none;
    color: #111;
}

.w-head { width: 40px; }
.w-a { width: 103px; }
.w-b { width: 39px; }
.w-c { width: 177px; }
.w-d { width: 96px; }
.w-e { width: 129px; }
.w-f { width: 97px; }
.w-g { width: 95px; }
.w-h { width: 96px; }
.w-i { width: 96px; }

.grid th, .grid td {
    height: 30px;
    padding: 0 3px;
    line-height: 24px;
    border-right: 1px solid #dcdde0;
    border-bottom: 1px solid #dcdde0;
    white-space: nowrap;
    text-align: left;
    vertical-align: middle;
}

.grid td {
    overflow: hidden;
    font-size: 20px;
}

.grid th {
    padding: 0;
    font-weight: normal;
    text-align: center;
    color: #333;
    background: #e4e5e7;
    border-color: #a5a7aa;
}

.grid thead th {
    height: 28px;
}

.grid thead .corner {
    padding: 5px 4px 3px 16px;
    background: linear-gradient(135deg, #e4e5e7 50%, #bfc1c4 50%) content-box, #e4e5e7;
}

.grid th.picked {
    background: #ffd75e;
    border-color: #b08a35;
}

.grid .num {
    text-align: right;
    font-size: 19px;
    padding-right: 2px;
}

.grid .sel {
    background: #b8d8ff;
    border-left: 3px solid #000;
    border-right: 3px solid #000;
    border-bottom-color: #b8d8ff;
}

.grid .first .sel {
    border-top: 3px solid #000;
}

.grid .ruled {
    border-bottom: 1px solid #45628c;
}

.grid .total {
    font-weight: bold;
    border-bottom: 3px double #45628c;
}

.grid .tall th, .grid .tall td {
    height: 32px;
    vertical-align: top;
    padding-top: 3px;
}

.size-tip {
    position: absolute;
    left: 682px;
    top: 67px;
    height: 18px;
    padding: 0 3px;
    line-height: 16px;
    color: #555;
    background: #fff;
    border: 1px solid #777;
    border-radius: 2px;
    box-shadow: 1px 1px 2px #aaa;
}

.cursor {
    position: absolute;
    left: 427px;
    top: 459px;
}

/* scroll bars */
.v-scroll {
    display: flex;
    flex-direction: column;
    align-items: center;
    width: 19px;
    padding-right: 4px;
    background: #dfe0e2;
    border-left: 1px solid #999;
    border-right: 1px solid #999;
}

.split {
    width: 13px;
    height: 7px;
    background: #fff;
    border: 1px solid #666;
}

.arrow {
    width: 8px;
    height: 5px;
    background: #333;
    flex: none;
}

.arrow.up {
    margin: 7px 0;
    clip-path: polygon(50% 0, 100% 100%, 0 100%);
}

.arrow.down {
    margin: 6px 0;
    clip-path: polygon(0 0, 100% 0, 50% 100%);
}

.arrow.left, .arrow.right {
    width: 5px;
    height: 8px;
    margin: 0 6px;
    clip-path: polygon(100% 0, 100% 100%, 0 50%);
}

.arrow.right {
    clip-path: polygon(0 0, 100% 50%, 0 100%);
}

.v-track {
    flex: 1;
    align-self: stretch;
    padding-top: 20px;
}

.v-thumb {
    display: grid;
    place-items: center;
    height: 79%;
    background: linear-gradient(90deg, #fff, #e6e7e9);
    border: 1px solid #777;
}

.v-thumb i {
    width: 7px;
    height: 7px;
    background: repeating-linear-gradient(#777 0 1px, transparent 1px 2px);
}

.sheet-bar {
    display: flex;
    height: 16px;
    flex: none;
    background: #dfe0e3;
    border-top: 1px solid #888;
    border-bottom: 1px solid #888;
    overflow: hidden;
    font-family: "Noto Sans", sans-serif;
}

.sheet-nav {
    display: flex;
    align-items: center;
    justify-content: space-around;
    width: 59px;
    background: #ececef;
    border-right: 1px solid #999;
}

.sheet-tab {
    position: relative;
    width: 57px;
    line-height: 14px;
    color: #555;
}

.sheet-tab::after {
    content: "";
    position: absolute;
    right: -4px;
    top: 0;
    height: 14px;
    border-right: 1px solid #888;
    transform: skewX(-38deg);
}

.sheet-tab.current {
    background: #fff;
    font-weight: bold;
    color: #222;
}

.sheet-tab.new {
    display: grid;
    place-items: center;
    width: 36px;
}

.h-scroll {
    display: flex;
    align-items: center;
    width: 396px;
    margin-left: auto;
    padding-right: 19px;
}

.h-split {
    width: 7px;
    height: 13px;
    background: #fff;
    border: 1px solid #777;
}

.h-track {
    flex: 1;
}

.h-thumb {
    display: grid;
    place-items: center;
    width: 87%;
    height: 14px;
    background: linear-gradient(#fff, #dfe0e3);
    border: 1px solid #888;
}

.h-thumb i {
    width: 7px;
    height: 7px;
    background: repeating-linear-gradient(90deg, #777 0 1px, transparent 1px 2px);
}

/* status bar */
.status-bar {
    display: flex;
    align-items: center;
    height: 20px;
    flex: none;
    font-family: "Noto Sans", sans-serif;
    font-size: 10px;
    line-height: 18px;
    background: linear-gradient(#f2f2f4, #c6c7ca);
    color: #444;
}

.ready {
    width: 46px;
    padding-left: 7px;
    border-right: 1px solid #888;
}

.stats {
    display: flex;
    gap: 15px;
    margin-left: auto;
    padding-right: 9px;
    border-right: 1px solid #999;
}

.stats span:first-child {
    margin-right: 12px;
}

.views {
    display: flex;
    padding-left: 4px;
}

.views button {
    display: grid;
    place-items: center;
    width: 18px;
    height: 18px;
}

.views .on {
    background: #ffe27a;
    border: 1px solid #c29b3c;
}

.zoom {
    display: flex;
    align-items: center;
    padding-left: 9px;
    margin-right: 5px;
}

.zoom span {
    width: 33px;
}

.zoom button {
    display: grid;
    place-items: center;
    width: 13px;
    height: 13px;
    border: 1px solid #666;
    border-radius: 50%;
    background: #fff;
}

.zoom input {
    appearance: none;
    width: 95px;
    height: 1px;
    background: #777;
}

.zoom input::-webkit-slider-thumb {
    appearance: none;
    width: 8px;
    height: 13px;
    border: 1px solid #666;
    background: #fff;
    border-radius: 1px 1px 4px 4px;
}

/* taskbar */
.taskbar {
    display: flex;
    align-items: center;
    gap: 4px;
    height: 38px;
    flex: none;
    background: linear-gradient(90deg, #8f6425, #9a6b26 40%, #866331 54%, #a99465 58%, #b3a47f 75%, #ab9770);
}

.start, .task {
    display: grid;
    place-items: center;
    width: 54px;
    height: 36px;
    flex: none;
}

.start {
    width: 45px;
}

.task.open {
    background: rgba(255, 255, 255, 0.18);
    border: 1px solid rgba(255, 240, 200, 0.5);
}

.task.current {
    background: rgba(255, 255, 255, 0.35);
}

.app-letter {
    font: bold 20px "Open Sans", sans-serif;
}

.outlook { fill: #e2871b; }
.excel { fill: #237a39; }
.ppt { fill: #d04a22; }
.word { fill: #1f5daf; }
.access { fill: #a3204f; }
.note { fill: #6b2f7d; }

.tray {
    display: flex;
    align-items: center;
    gap: 8px;
    margin-left: auto;
}

.clock {
    display: flex;
    flex-direction: column;
    width: 62px;
    margin-left: 5px;
    margin-right: 9px;
    text-align: center;
    line-height: 16px;
    color: #fff;
}

.seal {
    position: absolute;
    right: 42px;
    bottom: 31px;
    opacity: 0.75;
}

.seal-ring {
    font: bold 10px "DejaVu Sans", sans-serif;
    fill: #fff;
}

.seal-name {
    font: bold 13px "Liberation Serif", serif;
    fill: #465b60;
}
```
